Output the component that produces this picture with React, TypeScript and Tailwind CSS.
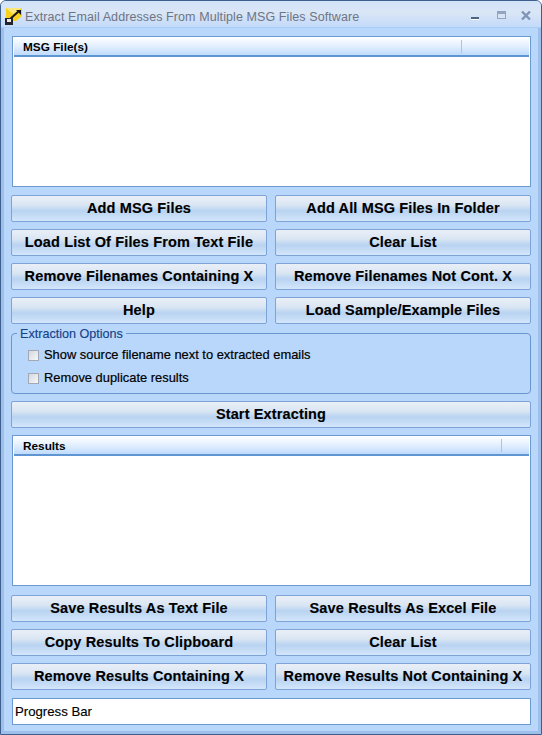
import React from "react";

function Btn({ label, className = "" }: { label: string; className?: string }) {
  return (
    <button className={"h-[27px] rounded-[2px] border border-[#7fa3d6] bg-[linear-gradient(to_bottom,#e9eff7_0%,#dbe6f3_35%,#b9d3f1_60%,#d3e6fb_100%)] text-[14.5px] font-bold text-black flex items-center justify-center whitespace-nowrap tracking-[0.14px] [-webkit-text-stroke:0.15px_black] " + className}>
      {label}
    </button>
  );
}

function ListBox({ title, columnRight, height }: { title: string; columnRight: number; height: string }) {
  return (
    <div className={"ml-px border border-[#6b9ad2] bg-white " + height}>
      <div className="relative h-[20px] border-b-2 border-[#5f95d3] bg-[linear-gradient(to_bottom,#ffffff_0%,#e6f1fe_45%,#bfdbfd_100%)] ml-px mr-[1px] pl-[9px] text-[11.8px] leading-[21px] font-bold text-black">
        {title}
        <div className="absolute top-[3px] h-[13px] w-px bg-[#9cc6f7]" style={{ right: columnRight }} />
      </div>
    </div>
  );
}

function Check({ label }: { label: string }) {
  return (
    <div className="flex items-center gap-[5px] h-[14px] text-[12.9px] font-normal text-black">
      <span className="w-[11px] h-[11px] border border-[#a3a9b4] bg-[linear-gradient(135deg,#d4d8de,#f7f8fa)]" />
      <span className="[-webkit-text-stroke:0.2px_black]">{label}</span>
    </div>
  );
}

export default function App() {
  return (
    <div className="w-[542px] h-[735px] flex flex-col overflow-hidden rounded-t-[6px] border border-[#3d5f8d] bg-[#b9d7fb] font-['Liberation_Sans',Arial,sans-serif]">
      {/* Title bar */}
      <div className="h-[27px] shrink-0 flex items-center pl-[3px] pr-[10px] pt-[5px] border-b border-[#a9cdf5] bg-[linear-gradient(to_bottom,#d3e3f7_0%,#d9e6f6_45%,#c3dafa_100%)]">
        <svg width="19" height="19" viewBox="0 0 19 19" className="shrink-0">
          <path d="M2 1h16v8l-6 5H2z" fill="#f7d21c" />
          <path d="M2 1l7 6 9-6" fill="#fbe87a" />
          <path d="M5 13L15 4" stroke="#14141e" strokeWidth="2" />
          <path d="M12 3h5v5z" fill="#14141e" />
          <rect x="1" y="11" width="8" height="7" fill="#23232b" />
          <rect x="3" y="12" width="4" height="3" fill="#e8e8e8" />
        </svg>
        <span className="ml-[2px] mt-[1px] text-[12.5px] text-[#6f7484] tracking-[0.09px] whitespace-nowrap">Extract Email Addresses From Multiple MSG Files Software</span>
        <div className="ml-auto flex items-center gap-[16px] -mt-[3px]">
          <div className="w-[8px] h-[2px] mt-[5px] mr-[1px] bg-[#4d6484] shadow-[0_1px_0_#fff]" />
          <div className="w-[9px] h-[8px] ml-px border border-[#93a5bd] border-t-[3px] bg-[#d6e4f6]" />
          <svg width="10" height="9" viewBox="0 0 10 9" className="-ml-px"><path d="M1 0.5l8 8M9 0.5l-8 8" stroke="#7f95b6" strokeWidth="2.4" /></svg>
        </div>
      </div>

      {/* Client area */}
      <div className="flex-1 flex flex-col px-[7px] pt-[8px] border-l-[3px] border-r-[3px] border-b-[3px] border-[#9dbfe9]">
        <ListBox title="MSG File(s)" columnRight={67} height="h-[151px]" />

        <div className="grid grid-cols-2 gap-x-[8px] gap-y-[7px] mt-[8px]">
          <Btn label="Add MSG Files" />
          <Btn label="Add All MSG Files In Folder" />
          <Btn label="Load List Of Files From Text File" />
          <Btn label="Clear List" />
          <Btn label="Remove Filenames Containing X" />
          <Btn label="Remove Filenames Not Cont. X" />
          <Btn label="Help" />
          <Btn label="Load Sample/Example Files" />
        </div>

        <div className="relative mt-[9px] h-[61px] rounded-[4px] border border-[#6a96cf] flex flex-col gap-[9px] pl-[16px] pt-[14px]">
          <span className="absolute -top-[7px] left-[5px] bg-[#b9d7fb] px-[3px] text-[12.6px] leading-[14px] text-[#15428b] [-webkit-text-stroke:0.15px_#15428b]">Extraction Options</span>
          <Check label="Show source filename next to extracted emails" />
          <Check label="Remove duplicate results" />
        </div>

        <Btn label="Start Extracting" className="mt-[7px] shrink-0" />

        <div className="mt-[7px]">
          <ListBox title="Results" columnRight={27} height="h-[151px]" />
        </div>

        <div className="grid grid-cols-2 gap-x-[8px] gap-y-[7px] mt-[9px]">
          <Btn label="Save Results As Text File" />
          <Btn label="Save Results As Excel File" />
          <Btn label="Copy Results To Clipboard" />
          <Btn label="Clear List" />
          <Btn label="Remove Results Containing X" />
          <Btn label="Remove Results Not Containing X" />
        </div>

        <div className="mt-[8px] ml-px h-[27px] border border-[#6b9ad2] bg-white pl-[2px] text-[13.2px] leading-[26px] text-black [-webkit-text-stroke:0.15px_black]">
          Progress Bar
        </div>
      </div>
    </div>
  );
}
